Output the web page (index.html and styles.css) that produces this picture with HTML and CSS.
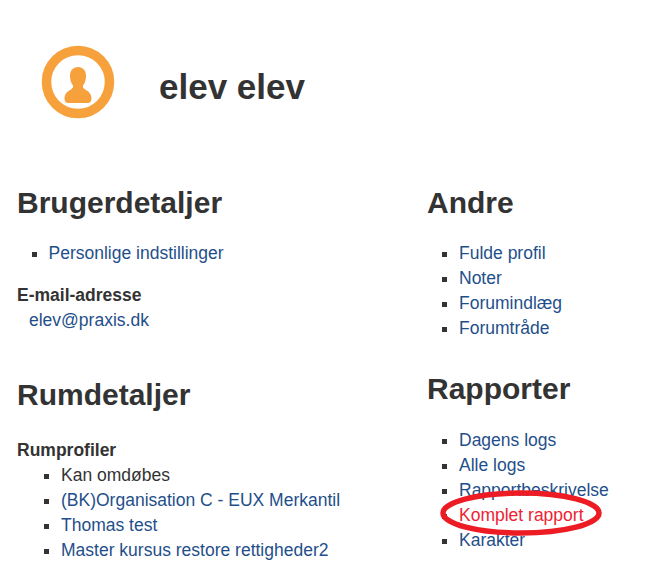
FILE: index.html
```html
<!DOCTYPE html>
<html lang="en">

<head>
  <meta charset="UTF-8">
  <title>elev elev</title>
  <link rel="stylesheet" href="styles.css">
</head>

<body>
  <div class="top">
    <svg class="avatar" width="76" height="76" viewBox="0 0 76 76">
      <circle cx="38" cy="38" r="31.5" fill="#fff" stroke="#f7a13d" stroke-width="9.5" />
      <path fill="#f7a13d" d="M38 23c-5 0-8 3.500-8 9 0 4 1 7 3 9.500 .3 1.500-.3 3-2.500 4.200-3.500 2-6 4.300-6 9 0 2.800 1.500 4.300 4 4.300h19c2.500 0 4-1.500 4-4.300 0-4.700-2.500-7-6-9-2.200-1.200-2.800-2.700-2.500-4.200 2-2.500 3-5.500 3-9.500 0-5.500-3-9-8-9z" />
    </svg>
    <h1>elev elev</h1>
  </div>

  <div class="cols">
    <div class="col left">
      <h2>Brugerdetaljer</h2>
      <ul>
        <li><a href="#">Personlige indstillinger</a></li>
      </ul>
      <dl>
        <dt>E-mail-adresse</dt>
        <dd><a href="#">elev@praxis.dk</a></dd>
      </dl>

      <h2 class="next">Rumdetaljer</h2>
      <dl class="rooms">
        <dt>Rumprofiler</dt>
        <dd>
          <ul>
            <li>Kan omdøbes</li>
            <li><a href="#">(BK)Organisation C - EUX Merkantil</a></li>
            <li><a href="#">Thomas test</a></li>
            <li><a href="#">Master kursus restore rettigheder2</a></li>
          </ul>
        </dd>
      </dl>
    </div>

    <div class="col right">
      <h2>Andre</h2>
      <ul>
        <li><a href="#">Fulde profil</a></li>
        <li><a href="#">Noter</a></li>
        <li><a href="#">Forumindlæg</a></li>
        <li><a href="#">Forumtråde</a></li>
      </ul>

      <h2 class="next">Rapporter</h2>
      <div class="reports">
        <ul>
          <li><a href="#">Dagens logs</a></li>
          <li><a href="#">Alle logs</a></li>
          <li><a href="#">Rapportbeskrivelse</a></li>
          <li><a class="red" href="#">Komplet rapport</a></li>
          <li><a href="#">Karakter</a></li>
        </ul>
        <svg class="ring" width="164" height="50" viewBox="0 0 164 50">
          <ellipse cx="82" cy="25" rx="78" ry="20" fill="none" stroke="#ed1c24" stroke-width="5.5" />
        </svg>
      </div>
    </div>
  </div>
</body>

</html>
```

FILE: styles.css
```css
* {
  margin: 0;
  padding: 0;
  box-sizing: border-box;
}

html,
body {
  height: 567px;
  overflow: hidden;
}

body {
  background-color: #fff;
  color: #333;
  font-family: "Liberation Sans", Arial, sans-serif;
  font-size: 17.5px;
  line-height: 25px;
}

a {
  color: #1f4f8a;
  text-decoration: none;
}

.top {
  display: flex;
  align-items: center;
  height: 163px;
  padding-left: 40px;
}

.avatar {
  margin-right: 43px;
}

h1 {
  font-size: 35px;
  line-height: 40px;
  font-weight: bold;
  margin-top: 11px;
}

.cols {
  display: flex;
  height: 404px;
  padding-left: 17px;
}

.left {
  width: 410px;
}

.right {
  width: 227px;
}

h2 {
  font-size: 30px;
  line-height: 40px;
  font-weight: bold;
  margin-top: 20px;
  margin-bottom: 18px;
}

h2.next {
  margin-top: 0;
}

ul {
  list-style: square;
  padding-left: 32px;
}

.left > ul {
  margin-bottom: 17px;
  padding-left: 31.5px;
}

.right > ul {
  margin-bottom: 28px;
}

.right h2.next {
  margin-bottom: 19px;
}

dl {
  margin-bottom: 42px;
}

.left h2.next {
  margin-bottom: 23px;
}

dl.rooms {
  margin-bottom: 0;
}

dt {
  font-weight: bold;
}

dd {
  padding-left: 12px;
}

.rooms dd {
  padding-left: 0;
}

.rooms ul {
  padding-left: 44px;
}

.reports {
  position: relative;
}

.red {
  color: #ee2233;
}

.ring {
  position: absolute;
  left: 12px;
  top: 60px;
}
```
